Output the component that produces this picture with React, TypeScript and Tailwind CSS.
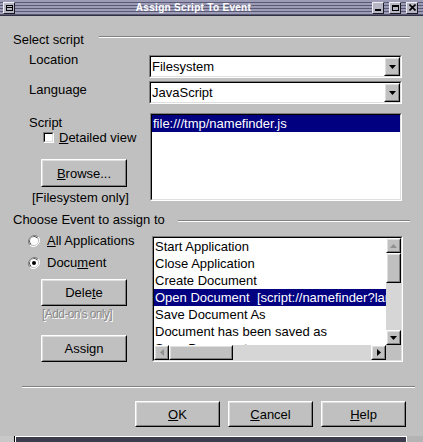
import type { ReactNode } from "react"

const events = [
  "Start Application",
  "Close Application",
  "Create Document",
  "Open Document  [script://namefinder?language=JavaScript&location=filesystem]",
  "Save Document As",
  "Document has been saved as",
  "Save Document",
]

function Raised({ className = "", children }: { className?: string; children?: ReactNode }) {
  return (
    <div className={`border border-t-white border-l-white border-r-black border-b-black ${className}`}>
      <div className="h-full w-full border border-t-[#dfdfdf] border-l-[#dfdfdf] border-r-[#808080] border-b-[#808080] flex items-center justify-center">
        {children}
      </div>
    </div>
  )
}

function Sunken({ className = "", children }: { className?: string; children?: ReactNode }) {
  return (
    <div className={`border border-t-[#808080] border-l-[#808080] border-r-white border-b-white ${className}`}>
      <div className="relative h-full w-full border border-t-black border-l-black border-r-[#dfdfdf] border-b-[#dfdfdf] bg-white overflow-hidden">
        {children}
      </div>
    </div>
  )
}

function Arrow({ dir, disabled = false }: { dir: "up" | "down" | "left" | "right"; disabled?: boolean }) {
  const fill = disabled ? "#909090" : "#000"
  const pts = {
    up: "0,4 7,4 3.5,0",
    down: "0,0 7,0 3.5,4",
    left: "4,0 4,7 0,3.5",
    right: "0,0 0,7 4,3.5",
  }[dir]
  const w = dir === "up" || dir === "down" ? 7 : 4
  const h = dir === "up" || dir === "down" ? 4 : 7
  return (
    <svg width={w} height={h} viewBox={`0 0 ${w} ${h}`}>
      <polygon points={pts} fill={fill} />
    </svg>
  )
}

function Select({ value }: { value: string }) {
  return (
    <Sunken className="w-[253px] h-[23px]">
      <div className="flex h-full items-center">
        <span className="flex-1 pl-[1px]">{value}</span>
        <Raised className="w-[16px] h-full bg-[#c0c0c0]">
          <Arrow dir="down" />
        </Raised>
      </div>
    </Sunken>
  )
}

function TitleButton({ children }: { children?: ReactNode }) {
  return (
    <div className="w-[12px] h-[12px] border border-t-[#eeeef4] border-l-[#eeeef4] border-r-[#1c1c28] border-b-[#1c1c28] bg-[#b6b6c4] flex items-center justify-center">
      {children}
    </div>
  )
}

function TitleBar() {
  return (
    <div className="h-[16px] flex items-center border-b border-b-[#303040] bg-[repeating-linear-gradient(to_bottom,#9c9cb6_0px,#9c9cb6_2px,#5a5a76_2px,#5a5a76_3px)]">
      <div className="ml-[3px]">
        <TitleButton>
          <div className="w-[7px] h-[6px] border border-black flex flex-col justify-center">
            <div className="h-[1px] bg-black" />
          </div>
        </TitleButton>
      </div>
      <div className="flex-1 text-center text-[10px] font-bold leading-[14px] text-white tracking-[0.3px]">
        Assign Script To Event
      </div>
      <div className="flex gap-[5px] mr-[5px]">
        <TitleButton>
          <div className="w-[6px] h-[2px] bg-black mt-[4px]" />
        </TitleButton>
        <TitleButton>
          <div className="w-[7px] h-[6px] border border-black border-t-2" />
        </TitleButton>
        <TitleButton>
          <svg width="7" height="7" viewBox="0 0 7 7">
            <path d="M0.5 0.5 L6.5 6.5 M6.5 0.5 L0.5 6.5" stroke="#000" strokeWidth="1.6" />
          </svg>
        </TitleButton>
      </div>
    </div>
  )
}

function Etched({ className = "" }: { className?: string }) {
  return <div className={`h-[2px] border-t border-t-[#808080] border-b border-b-white ${className}`} />
}

function CheckBox() {
  return (
    <div className="w-[11px] h-[11px] border border-t-[#808080] border-l-[#808080] border-r-white border-b-white">
      <div className="h-full w-full border border-t-black border-l-black border-r-[#dfdfdf] border-b-[#dfdfdf] bg-white" />
    </div>
  )
}

function Radio({ checked }: { checked?: boolean }) {
  return (
    <svg width="12" height="12" viewBox="0 0 12 12">
      <path d="M10.2 1.8 A6 6 0 0 0 1.8 10.2" fill="none" stroke="#808080" strokeWidth="1" />
      <path d="M9.2 2.8 A4.6 4.6 0 0 0 2.8 9.2" fill="none" stroke="#000" strokeWidth="1" />
      <path d="M1.8 10.2 A6 6 0 0 0 10.2 1.8" fill="none" stroke="#fff" strokeWidth="1" />
      <circle cx="6" cy="6" r="4" fill="#fff" />
      {checked && <circle cx="6" cy="6" r="2" fill="#000" />}
    </svg>
  )
}

export default function App() {
  return (
    <div className="w-[423px] h-[442px] bg-[#c0c0c0] flex flex-col overflow-hidden text-black text-[13px] leading-[15px] font-['Liberation_Sans',Arial,sans-serif]">
      <TitleBar />

      {/* Select script */}
      <div className="mt-[16px] flex items-start">
        <span className="pl-[13px]">Select script</span>
        <Etched className="flex-1 ml-[15px] mr-[13px] mt-[4px]" />
      </div>

      <div className="mt-[8px] flex h-[23px]">
        <span className="w-[149px] pl-[29px] -mt-[3px]">Location</span>
        <Select value="Filesystem" />
      </div>

      <div className="mt-[3px] flex h-[23px]">
        <span className="w-[149px] pl-[29px] mt-[1px]">Language</span>
        <Select value="JavaScript" />
      </div>

      <div className="mt-[9px] flex h-[99px]">
        <div className="w-[150px] flex flex-col">
          <span className="pl-[29px] mt-[2px]">Script</span>
          <div className="flex items-center ml-[43px]">
            <CheckBox />
            <span className="ml-[5px]">
              <span className="underline">D</span>etailed view
            </span>
          </div>
          <Raised className="ml-[41px] mt-[14px] w-[86px] h-[28px]">
            <span>
              <span className="underline">B</span>rowse...
            </span>
          </Raised>
          <span className="pl-[32px] mt-[3px]">[Filesystem only]</span>
        </div>
        <Sunken className="w-[252px] h-[88px]">
          <div className="bg-[#000080] text-white h-[17px] flex items-center pl-[1px]">
            file:///tmp/namefinder.js
          </div>
        </Sunken>
      </div>

      {/* Choose Event */}
      <div className="flex items-start">
        <span className="pl-[13px]">Choose Event to assign to</span>
        <Etched className="flex-1 ml-[13px] mr-[13px] mt-[8px]" />
      </div>

      <div className="mt-[6px] flex">
        <div className="w-[152px] flex flex-col">
          <div className="flex items-center ml-[28px]">
            <Radio />
            <span className="ml-[7px]">
              <span className="underline">A</span>ll Applications
            </span>
          </div>
          <div className="flex items-center ml-[28px] mt-[7px]">
            <Radio checked />
            <span className="ml-[7px]">
              Docu<span className="underline">m</span>ent
            </span>
          </div>
          <Raised className="ml-[41px] mt-[9px] w-[86px] h-[27px]">
            <span>
              Dele<span className="underline">t</span>e
            </span>
          </Raised>
          <span className="pl-[42px] mt-[1px] text-[#8a8a8a] [text-shadow:1px_1px_0_#fff] text-[12px] tracking-[-0.6px]">
            [Add-on's only]
          </span>
          <Raised className="ml-[41px] mt-[13px] w-[86px] h-[27px]">
            <span>Assign</span>
          </Raised>
        </div>
        <Sunken className="mt-[3px] w-[251px] h-[126px]">
          <div className="flex h-full flex-col">
            <div className="flex flex-1 min-h-0">
              <div className="flex-1 min-w-0 overflow-hidden">
                {events.map((e, i) => (
                  <div
                    key={i}
                    className={`h-[17px] flex items-center pl-[1px] whitespace-pre ${
                      i === 3 ? "bg-[#000080] text-white" : ""
                    }`}
                  >
                    {e}
                  </div>
                ))}
              </div>
              <div className="w-[15px] flex flex-col bg-[#d6d6d6]">
                <Raised className="h-[15px] bg-[#c0c0c0]">
                  <Arrow dir="up" disabled />
                </Raised>
                <Raised className="h-[30px] bg-[#c0c0c0]" />
                <div className="flex-1" />
                <Raised className="h-[15px] bg-[#c0c0c0]">
                  <Arrow dir="down" />
                </Raised>
              </div>
            </div>
            <div className="h-[15px] flex bg-[#d6d6d6]">
              <Raised className="w-[15px] bg-[#c0c0c0]">
                <Arrow dir="left" disabled />
              </Raised>
              <Raised className="w-[64px] bg-[#c0c0c0]" />
              <div className="flex-1" />
              <Raised className="w-[15px] bg-[#c0c0c0]">
                <Arrow dir="right" />
              </Raised>
              <div className="w-[15px] bg-[#c0c0c0]" />
            </div>
          </div>
        </Sunken>
      </div>

      <Etched className="mt-[24px] ml-[22px] w-[393px]" />

      <div className="mt-[13px] flex gap-[8px] pl-[135px]">
        <Raised className="w-[85px] h-[26px]">
          <span>
            <span className="underline">O</span>K
          </span>
        </Raised>
        <Raised className="w-[85px] h-[26px]">
          <span>
            <span className="underline">C</span>ancel
          </span>
        </Raised>
        <Raised className="w-[85px] h-[26px]">
          <span>
            <span className="underline">H</span>elp
          </span>
        </Raised>
      </div>

      {/* window frame bottom */}
      <div className="mt-auto h-[6px] flex">
        <div className="w-[15px] bg-[#c8c8c8] border-r border-r-black" />
        <div className="flex-1 bg-[#3c3c4c] border-t border-l border-t-white border-l-white" />
        <div className="w-[17px] bg-[#b4b4b4] border-l border-l-white" />
      </div>
    </div>
  )
}
